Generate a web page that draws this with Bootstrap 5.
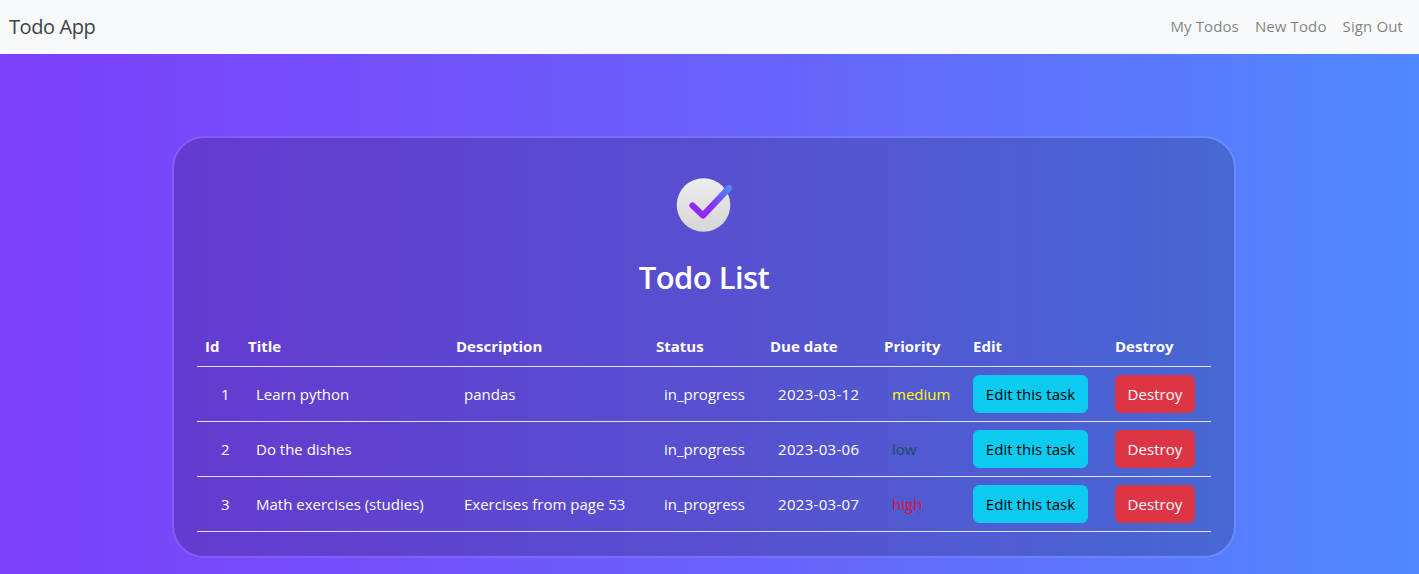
<!DOCTYPE html>
<html lang="en">
<head>
<meta charset="utf-8">
<title>Todo App</title>
<link href="https://cdn.jsdelivr.net/npm/bootstrap@5.3.0/dist/css/bootstrap.min.css" rel="stylesheet">
<style>
:root{--ui-font:"Open Sans","Noto Sans",sans-serif;}
body{font-family:var(--ui-font);font-size:15px;letter-spacing:0;min-height:100vh;background:linear-gradient(90deg,#7d3ffa 0%,#6a60fb 50%,#4f88ff 100%);}
.navbar.top-bar{height:54px;padding:0 16px 0 9px;}
.top-bar .navbar-brand{font-size:20px;padding:0;margin:0;color:#3c4248;letter-spacing:-.4px;}
.top-bar .navbar-nav .nav-link{padding:0 0 0 16px;color:rgba(0,0,0,.5);margin-top:-1px;letter-spacing:.12px;}
.glass-panel{width:1064px;margin:82px 0 0 172px;height:422px;padding:39px 24px 0;background:rgba(0,0,0,.17);border:2px solid rgba(255,255,255,.1);border-radius:32px;color:#fff;background-clip:padding-box;}
.check-logo{display:block;margin:0 auto;width:58px;height:56px;}
.panel-title{font-size:31px;font-weight:600;text-align:center;margin:24px 0 0;line-height:40px;letter-spacing:-.55px;}
.task-table{--bs-table-bg:transparent;--bs-table-color:#fff;--bs-table-border-color:#dee2e6;table-layout:fixed;width:1014px;margin:27px 0 0 -1px;color:#fff;}
.task-table th{padding:9px 8px 7px;height:42px;font-weight:700;vertical-align:middle;border-bottom:1px solid #dee2e6;}
.task-table td{height:55px;padding:1px 8px 0 16px;vertical-align:middle;white-space:nowrap;}
.task-table td.num-cell{padding-left:24px;}
.task-table td.act-cell{padding:0 8px;}
.task-table td.date-cell{letter-spacing:.3px;}
.btn-cell{font-size:15px;height:38px;padding:0;letter-spacing:.05px;line-height:36px;border-radius:6px;}
.edit-btn{width:115px;}
.drop-btn{width:80px;}
.prio-medium{color:#ffff00;}
.prio-low{color:#14505a;}
.prio-high{color:#dc1430;}
</style>
</head>
<body>
<nav class="navbar navbar-expand bg-light top-bar">
  <a class="navbar-brand" href="#">Todo App</a>
  <ul class="navbar-nav ms-auto">
    <li class="nav-item"><a class="nav-link" href="#">My Todos</a></li>
    <li class="nav-item"><a class="nav-link" href="#">New Todo</a></li>
    <li class="nav-item"><a class="nav-link" href="#">Sign Out</a></li>
  </ul>
</nav>
<main class="glass-panel">
  <svg class="check-logo" viewBox="0 0 58 56" aria-hidden="true">
    <defs>
      <linearGradient id="discFill" x1="0" y1="0" x2="0" y2="1"><stop offset="0" stop-color="#ededed"/><stop offset="1" stop-color="#d6d6d6"/></linearGradient>
      <linearGradient id="tickFill" gradientUnits="userSpaceOnUse" x1="18" y1="38" x2="54" y2="10"><stop offset="0" stop-color="#9226f2"/><stop offset=".45" stop-color="#8a2ff5"/><stop offset="1" stop-color="#4a8cff"/></linearGradient>
    </defs>
    <circle cx="28.5" cy="28" r="26.8" fill="url(#discFill)"/>
    <path d="M17.5 28.5 L28 38.5 L54 11" fill="none" stroke="url(#tickFill)" stroke-width="6.2" stroke-linecap="round" stroke-linejoin="round"/>
  </svg>
  <h1 class="panel-title">Todo List</h1>
  <table class="table task-table">
    <colgroup><col style="width:43px"><col style="width:208px"><col style="width:200px"><col style="width:114px"><col style="width:114px"><col style="width:89px"><col style="width:142px"><col style="width:104px"></colgroup>
    <thead><tr><th>Id</th><th>Title</th><th>Description</th><th>Status</th><th>Due date</th><th>Priority</th><th>Edit</th><th>Destroy</th></tr></thead>
    <tbody>
      <tr><td class="num-cell">1</td><td>Learn python</td><td>pandas</td><td>in_progress</td><td class="date-cell">2023-03-12</td><td class="prio-medium">medium</td><td class="act-cell"><a class="btn btn-info btn-cell edit-btn" href="#">Edit this task</a></td><td class="act-cell"><a class="btn btn-danger btn-cell drop-btn" href="#">Destroy</a></td></tr>
      <tr><td class="num-cell">2</td><td>Do the dishes</td><td></td><td>in_progress</td><td class="date-cell">2023-03-06</td><td class="prio-low">low</td><td class="act-cell"><a class="btn btn-info btn-cell edit-btn" href="#">Edit this task</a></td><td class="act-cell"><a class="btn btn-danger btn-cell drop-btn" href="#">Destroy</a></td></tr>
      <tr><td class="num-cell">3</td><td>Math exercises (studies)</td><td>Exercises from page 53</td><td>in_progress</td><td class="date-cell">2023-03-07</td><td class="prio-high">high</td><td class="act-cell"><a class="btn btn-info btn-cell edit-btn" href="#">Edit this task</a></td><td class="act-cell"><a class="btn btn-danger btn-cell drop-btn" href="#">Destroy</a></td></tr>
    </tbody>
  </table>
</main>
<script src="https://cdn.jsdelivr.net/npm/bootstrap@5.3.0/dist/js/bootstrap.bundle.min.js"></script>
</body>
</html>
